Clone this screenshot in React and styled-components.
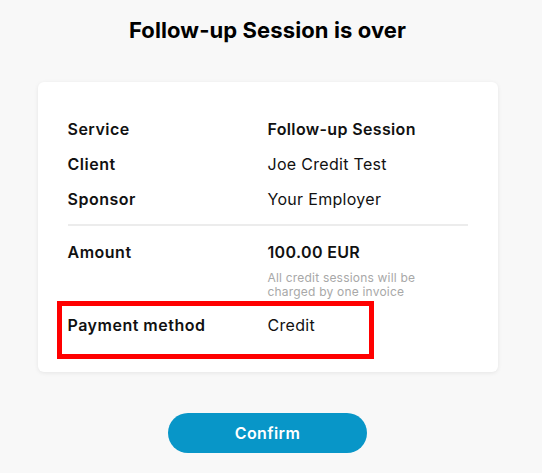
import React from "react";
import styled, { createGlobalStyle } from "styled-components";

const GlobalStyle = createGlobalStyle`
  body {
    margin: 0;
    background: #f8f8f8;
    font-family: Inter, "Noto Sans", sans-serif;
    color: #111;
  }
`;

const details = [
  { label: "Service", value: "Follow-up Session", strong: true },
  { label: "Client", value: "Joe Credit Test" },
  { label: "Sponsor", value: "Your Employer" },
];

function App() {
  return (
    <>
      <GlobalStyle />
      <Page>
        <Title>Follow-up Session is over</Title>
        <Card>
          <Rows>
            {details.map((item) => (
              <Row key={item.label}>
                <Label>{item.label}</Label>
                <Value strong={item.strong}>{item.value}</Value>
              </Row>
            ))}
          </Rows>
          <Divider />
          <Row>
            <Label>Amount</Label>
            <div>
              <Value strong>100.00 EUR</Value>
              <Note>
                All credit sessions will be
                <br />
                charged by one invoice
              </Note>
            </div>
          </Row>
          <Highlighted>
            <Label>Payment method</Label>
            <Value>Credit</Value>
          </Highlighted>
        </Card>
        <ConfirmButton>Confirm</ConfirmButton>
      </Page>
    </>
  );
}

export default App;

const Page = styled.div`
  width: 535px;
  padding-top: 16px;
  display: flex;
  flex-direction: column;
  align-items: center;
`;

const Title = styled.h1`
  margin: 0;
  font-size: 22px;
  line-height: 28px;
  font-weight: 700;
  letter-spacing: 0.1px;
  color: #000;
`;

const Card = styled.section`
  width: 400px;
  margin-top: 38px;
  padding: 37px 30px 37px;
  background: #fff;
  border-radius: 6px;
  box-shadow: 0 1px 4px rgba(0, 0, 0, 0.08);
`;

const Rows = styled.div`
  display: flex;
  flex-direction: column;
  gap: 15px;
`;

const Row = styled.div`
  display: grid;
  grid-template-columns: 200px 1fr;
  font-size: 16px;
  line-height: 20px;
`;

const Highlighted = styled(Row)`
  position: relative;
  margin-top: 16px;
  &::after {
    content: "";
    position: absolute;
    left: -11px;
    top: -14px;
    width: 307px;
    height: 48px;
    border: 5px solid #ff0000;
  }
`;

const Label = styled.div`
  font-weight: 600;
  letter-spacing: 0.5px;
  color: #111;
`;

const Value = styled.div`
  font-weight: ${(p) => (p.strong ? 600 : 400)};
  letter-spacing: ${(p) => (p.strong ? "0.35px" : "0.3px")};
  color: #111;
`;

const Note = styled.div`
  margin-top: 9px;
  font-size: 12px;
  line-height: 14px;
  letter-spacing: 0.2px;
  color: #a8a8a8;
`;

const Divider = styled.hr`
  margin: 15px 0 16px;
  border: none;
  height: 2px;
  background: #ececec;
`;

const ConfirmButton = styled.button`
  margin-top: 41px;
  width: 199px;
  height: 40px;
  border: none;
  border-radius: 20px;
  background: #0896c8;
  color: #fff;
  font-family: Inter, "Noto Sans", sans-serif;
  font-size: 16px;
  font-weight: 600;
  letter-spacing: 0.4px;
  cursor: pointer;
`;
